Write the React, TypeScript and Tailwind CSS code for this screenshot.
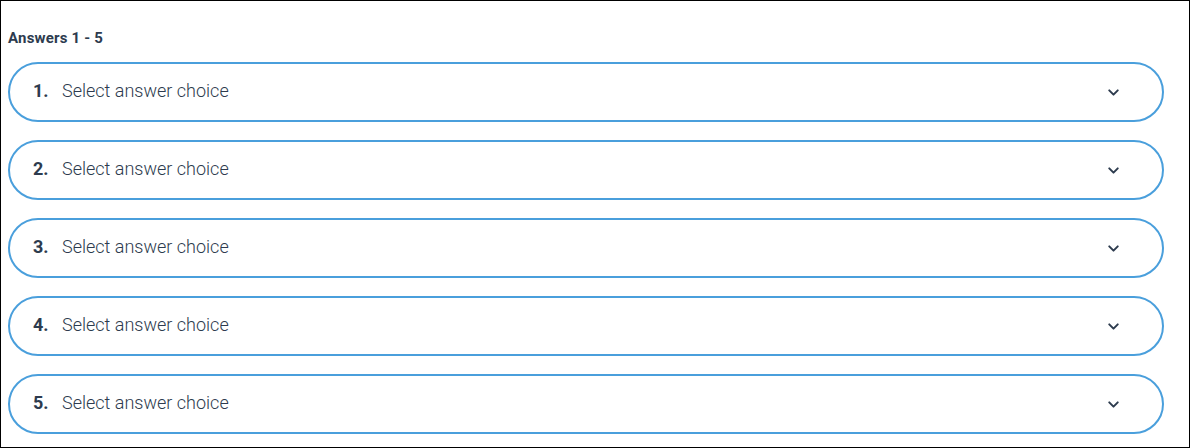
import React from 'react';

const answers = [1, 2, 3, 4, 5];

const Chevron: React.FC = () => (
  <svg width="17" height="17" viewBox="0 0 24 24" fill="none" stroke="#2d3b4e" strokeWidth="2.8" strokeLinecap="round" strokeLinejoin="round">
    <path d="M6 9l6 6 6-6" />
  </svg>
);

const AnswerRow: React.FC<{ n: number }> = ({ n }) => (
  <div className="h-[60px] rounded-full border-2 border-[#4a9fdc] flex items-center pl-[23px] pr-[40px] cursor-pointer">
    <div className="flex-1 flex items-baseline pb-[3px] text-[18px] leading-[24px] text-[#2d3b4e]">
      <span className="w-[29px] font-bold">{n}.</span>
      <span className="font-light">Select answer choice</span>
    </div>
    <Chevron />
  </div>
);

const App: React.FC = () => (
  <div className="w-[1190px] h-[448px] border border-black bg-white overflow-hidden" style={{ fontFamily: 'Roboto, "Liberation Sans", sans-serif' }}>
    <div className="pt-[28px] pl-[7px] pr-[25px]">
      <h3 className="text-[15px] leading-[18px] tracking-[0.2px] font-bold text-[#2d3b4e] mb-[15px]">Answers 1 - 5</h3>
      <div className="flex flex-col gap-[18px]">
        {answers.map((n) => (
          <AnswerRow key={n} n={n} />
        ))}
      </div>
    </div>
  </div>
);

export default App;
